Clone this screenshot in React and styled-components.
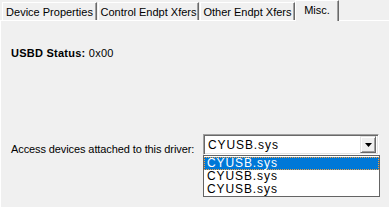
import React from 'react';
import styled, { createGlobalStyle } from 'styled-components';

const Global = createGlobalStyle`
    body {
        margin: 0;
        background: #f0f0f0;
    }
`

const Window = styled.div`
    width: 389px;
    height: 207px;
    background: #f0f0f0;
    font-family: "Liberation Sans", Arial, sans-serif;
    font-size: 11px;
    color: #000;
    overflow: hidden;
    display: flex;
    flex-direction: column;
`

const TabStrip = styled.div`
    display: flex;
    align-items: flex-end;
    height: 20px;
    padding-left: 2px;
    position: relative;
    z-index: 1;
`

const Tab = styled.div`
    box-sizing: border-box;
    width: ${p => p.$w}px;
    height: ${p => (p.$active ? 21 : 18)}px;
    margin-left: ${p => p.$gap || 0}px;
    margin-bottom: ${p => (p.$active ? -1 : 0)}px;
    background: #f0f0f0;
    border-top: 1px solid #fff;
    border-left: 1px solid #fff;
    border-right: 1px solid #696969;
    box-shadow: inset -1px 0 0 #a0a0a0;
    display: flex;
    align-items: ${p => (p.$active ? 'flex-start' : 'center')};
    justify-content: center;
    padding-top: ${p => (p.$active ? 3 : 0)}px;
    white-space: nowrap;
`

const Panel = styled.div`
    flex: 1;
    border-top: 1px solid #fff;
    border-left: 1px solid #fff;
    padding: 25px 0 0 10px;
    display: flex;
    flex-direction: column;
`

const Status = styled.div`
    height: 14px;
    line-height: 14px;
    letter-spacing: 0.25px;
    b {
        font-weight: bold;
    }
`

const DriverRow = styled.div`
    margin-top: 74px;
    display: flex;
    align-items: flex-start;
`

const Label = styled.div`
    flex: 0 0 192px;
    padding-top: 9px;
    white-space: nowrap;
    letter-spacing: -0.1px;
`

const Combo = styled.div`
    display: flex;
    flex-direction: column;
    width: 176px;
    font-size: 12px;
    letter-spacing: 0.9px;
`

const ComboBox = styled.div`
    box-sizing: border-box;
    height: 21px;
    background: #fff;
    border-top: 1px solid #a0a0a0;
    border-left: 1px solid #a0a0a0;
    border-right: 1px solid #fff;
    border-bottom: 1px solid #fff;
    box-shadow: inset 1px 1px 0 #696969, inset -1px -1px 0 #e3e3e3;
    display: flex;
    align-items: center;
    padding: 2px 2px 2px 4px;
`

const ComboText = styled.span`
    flex: 1;
`

const ArrowButton = styled.div`
    box-sizing: border-box;
    width: 16px;
    height: 17px;
    background: #f0f0f0;
    border-top: 1px solid #e3e3e3;
    border-left: 1px solid #e3e3e3;
    border-right: 1px solid #696969;
    border-bottom: 1px solid #696969;
    box-shadow: inset 1px 1px 0 #fff, inset -1px -1px 0 #a0a0a0;
    display: flex;
    align-items: center;
    justify-content: center;
`

const List = styled.div`
    box-sizing: border-box;
    width: 177px;
    height: 42px;
    background: #fff;
    border: 1px solid #646464;
    padding-top: 1px;
`

const Item = styled.div`
    box-sizing: border-box;
    height: 13px;
    line-height: 11px;
    padding-left: 2px;
    background: ${p => (p.$selected ? '#0078d7' : 'transparent')};
    color: ${p => (p.$selected ? '#fff' : '#000')};
    border: 1px dotted ${p => (p.$selected ? '#f0a040' : 'transparent')};
`

function App() {
    return <Window>
        <Global />
        <TabStrip>
            <Tab $w={95}>Device Properties</Tab>
            <Tab $w={101} $gap={1}>Control Endpt Xfers</Tab>
            <Tab $w={95} $gap={1}>Other Endpt Xfers</Tab>
            <Tab $w={44} $active>Misc.</Tab>
        </TabStrip>
        <Panel>
            <Status><b>USBD Status:</b> 0x00</Status>
            <DriverRow>
                <Label>Access devices attached to this driver:</Label>
                <Combo>
                    <ComboBox>
                        <ComboText>CYUSB.sys</ComboText>
                        <ArrowButton>
                            <svg width="7" height="4" viewBox="0 0 7 4">
                                <path d="M0 0h7L3.5 4z" fill="#000" />
                            </svg>
                        </ArrowButton>
                    </ComboBox>
                    <List>
                        <Item $selected>CYUSB.sys</Item>
                        <Item>CYUSB.sys</Item>
                        <Item>CYUSB.sys</Item>
                    </List>
                </Combo>
            </DriverRow>
        </Panel>
    </Window>
}

export default App;
